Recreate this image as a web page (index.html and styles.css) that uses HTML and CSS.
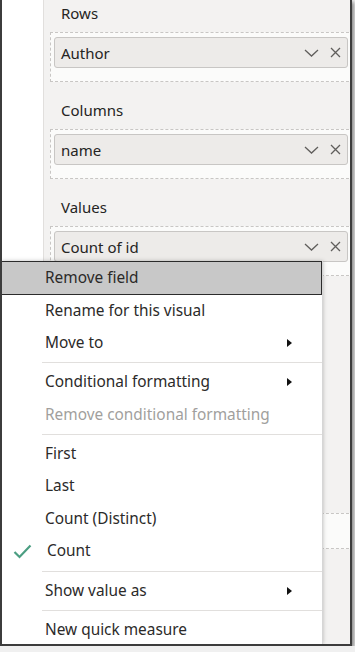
FILE: index.html
```html
<!DOCTYPE html>
<html lang="en">
<head>
  <meta charset="UTF-8" />
  <title>Field wells</title>
  <link rel="stylesheet" href="styles.css">
</head>
<body>
  <div class="frame">
    <div class="rail"></div>

    <div class="pane">
      <div class="well">
        <div class="well-label">Rows</div>
        <div class="dropzone">
          <div class="pill">
            <span>Author</span>
            <span class="pill-icons">
              <svg class="chev" width="15" height="8" viewBox="0 0 15 8"><path d="M1 1 L7.5 7 L14 1" /></svg>
              <svg class="close" width="11" height="11" viewBox="0 0 11 11"><path d="M1 1 L10 10 M10 1 L1 10" /></svg>
            </span>
          </div>
        </div>
      </div>

      <div class="well">
        <div class="well-label">Columns</div>
        <div class="dropzone">
          <div class="pill">
            <span>name</span>
            <span class="pill-icons">
              <svg class="chev" width="15" height="8" viewBox="0 0 15 8"><path d="M1 1 L7.5 7 L14 1" /></svg>
              <svg class="close" width="11" height="11" viewBox="0 0 11 11"><path d="M1 1 L10 10 M10 1 L1 10" /></svg>
            </span>
          </div>
        </div>
      </div>

      <div class="well">
        <div class="well-label">Values</div>
        <div class="dropzone">
          <div class="pill">
            <span>Count of id</span>
            <span class="pill-icons">
              <svg class="chev" width="15" height="8" viewBox="0 0 15 8"><path d="M1 1 L7.5 7 L14 1" /></svg>
              <svg class="close" width="11" height="11" viewBox="0 0 11 11"><path d="M1 1 L10 10 M10 1 L1 10" /></svg>
            </span>
          </div>
        </div>
      </div>

      <!-- lower well, hidden under the menu except for its right end -->
      <div class="dropzone empty"></div>
    </div>

    <!-- context menu for the Values field -->
    <div class="menu">
      <div class="item active">Remove field</div>
      <div class="item">Rename for this visual</div>
      <div class="item sub">Move to</div>
      <div class="sep"></div>
      <div class="item sub">Conditional formatting</div>
      <div class="item disabled">Remove conditional formatting</div>
      <div class="sep"></div>
      <div class="item">First</div>
      <div class="item">Last</div>
      <div class="item">Count (Distinct)</div>
      <div class="item checked">
        <svg class="check" width="19" height="15" viewBox="0 0 19 15"><path d="M1.5 8 L6.5 13 L17.5 1.5" /></svg>
        Count
      </div>
      <div class="sep"></div>
      <div class="item sub">Show value as</div>
      <div class="sep"></div>
      <div class="item">New quick measure</div>
    </div>
  </div>
</body>
</html>
```

FILE: styles.css
```css
* { box-sizing: border-box; }

body {
  margin: 0;
  background: #f0f0f0;
  font-family: 'Noto Sans', sans-serif;
  font-size: 14px;
  color: #252423;
}

.frame {
  position: relative;
  width: 352px;
  height: 646px;
  display: flex;
  border: 2px solid #3c3c3c;
  border-top: none;
  box-shadow: 2px 2px 4px rgba(0, 0, 0, 0.45);
  overflow: hidden;
  background: #ffffff;
}

.rail {
  width: 42px;
  background: #ffffff;
  border-right: 1px solid #e1dfdd;
}

.pane {
  flex: 1;
  background: #f3f2f1;
  padding: 3px 0 0 6px;
}

.well { margin-bottom: 18px; }

.well-label {
  height: 20px;
  line-height: 20px;
  padding-left: 11px;
  margin-bottom: 9px;
  font-size: 15px;
}

.dropzone {
  height: 50px;
  margin-right: -4px;
  padding: 4px 6px 0 3px;
  border: 1px dashed #c8c6c4;
  border-right: none;
  background: #fbfbfa;
}

.dropzone.empty {
  height: 36px;
  margin-top: 237px;
}

.pill {
  height: 31px;
  display: flex;
  align-items: center;
  justify-content: space-between;
  padding: 0 6px;
  background: #edebe9;
  border: 1px solid #c8c6c4;
  border-radius: 3px;
  font-size: 15px;
}

.pill-icons {
  display: flex;
  align-items: center;
  gap: 11px;
}

.pill-icons svg {
  fill: none;
  stroke: #605e5c;
  stroke-width: 1.3;
}

.menu {
  position: absolute;
  left: 0;
  top: 261px;
  width: 321px;
  bottom: 0;
  background: #ffffff;
  border-right: 1px solid #d6d6d6;
  box-shadow: 0 0 4px rgba(0, 0, 0, 0.25);
  font-size: 15.4px;
  color: #2b2a29;
}

.item {
  position: relative;
  height: 32.4px;
  line-height: 32.4px;
  padding-left: 43px;
}

.item.active {
  height: 33.5px;
  line-height: 31px;
  background: #c8c8c8;
  border: 1.5px solid #2b2b2b;
  border-left: none;
}

.item.disabled { color: #a19f9d; }

.item.sub::after {
  content: "";
  position: absolute;
  right: 30px;
  top: 12px;
  border-left: 5px solid #111;
  border-top: 4.5px solid transparent;
  border-bottom: 4.5px solid transparent;
}

.item.checked { padding-left: 45px; }

.check {
  position: absolute;
  left: 11px;
  top: 9px;
  fill: none;
  stroke: #4b9e82;
  stroke-width: 2.2;
}

.sep {
  height: 1px;
  margin: 3px 0 3px 40px;
  background: #e1dfdd;
}
```
